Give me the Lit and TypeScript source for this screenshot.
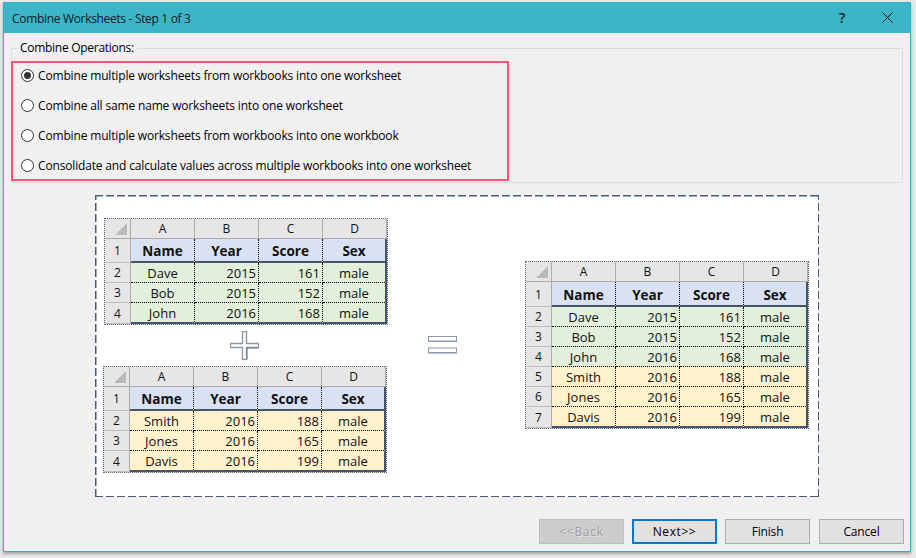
import {LitElement, html, css, svg} from 'lit';
import {customElement, property} from 'lit/decorators.js';

type Row = [string, number, number];

const GREEN: Row[] = [['Dave', 2015, 161], ['Bob', 2015, 152], ['John', 2016, 168]];
const YELLOW: Row[] = [['Smith', 2016, 188], ['Jones', 2016, 165], ['Davis', 2016, 199]];

const OPTIONS = [
    'Combine multiple worksheets from workbooks into one worksheet',
    'Combine all same name worksheets into one worksheet',
    'Combine multiple worksheets from workbooks into one workbook',
    'Consolidate and calculate values across multiple workbooks into one worksheet',
];

@customElement('sheet-table')
export class SheetTable extends LitElement {
    @property({type: Array})
    green: Row[] = [];

    @property({type: Array})
    yellow: Row[] = [];

    // height of the "Name Year Score Sex" row
    @property({type: Number})
    head: number = 24;

    static override styles = css`
        :host {
            display: block;
            width: 284px;
        }

        .sheet {
            display: grid;
            grid-template-columns: 26px repeat(4, 64px);
            border: 1px dotted #55657a;
            font-family: "Open Sans", "Noto Sans", sans-serif;
            font-size: 13px;
            color: #111;
            background: #e6e6e6;
        }

        .sheet > div {
            display: flex;
            align-items: center;
            justify-content: center;
            box-sizing: border-box;
            overflow: hidden;
            white-space: nowrap;
        }

        .corner {
            border-right: 1px solid #ababab;
            border-bottom: 1px solid #ababab;
            padding: 3px 2px 2px 8px;
        }

        .corner svg {
            display: block;
        }

        .col {
            font-size: 12px;
            border-right: 1px solid #ababab;
            border-bottom: 1px solid #ababab;
            padding-bottom: 1px;
        }

        .num {
            font-size: 12px;
            border-right: 1px solid #ababab;
            border-bottom: 1px solid #bdbdbd;
        }

        .head {
            font-weight: 700;
            font-size: 13.5px;
            background: #d9e1f2;
            border-right: 1px dotted #000;
            border-bottom: 2px solid #44546a;
            padding-top: 2px;
        }

        .cell {
            border-right: 1px dotted #000;
            border-bottom: 1px dotted #000;
        }

        .sheet > .right {
            justify-content: flex-end;
            padding-right: 2px;
        }

        .g {
            background: #e2efda;
        }

        .y {
            background: #fff2cc;
        }

        .sheet > .end {
            border-right: 2px solid #44546a;
        }

        .sheet > .last {
            border-bottom: 2px solid #44546a;
        }
    `;

    override render() {
        const rows = [...this.green.map((r) => ({r, c: 'g'})), ...this.yellow.map((r) => ({r, c: 'y'}))];
        const heights = `20px ${this.head}px repeat(${rows.length - 1}, 20px) 21px`;
        return html`
            <div class="sheet" style="grid-template-rows: ${heights}">
                <div class="corner">
                    <svg width="14" height="14" viewBox="0 0 14 14"><polygon points="13,1 13,13 1,13" fill="#b9b9b9"/></svg>
                </div>
                ${['A', 'B', 'C', 'D'].map((l) => html`<div class="col">${l}</div>`)}
                <div class="num">1</div>
                <div class="head">Name</div>
                <div class="head">Year</div>
                <div class="head">Score</div>
                <div class="head end">Sex</div>
                ${rows.map(({r, c}, i) => {
                    const last = i === rows.length - 1 ? 'last' : '';
                    return html`
                        <div class="num">${i + 2}</div>
                        <div class="cell ${c} ${last}">${r[0]}</div>
                        <div class="cell right ${c} ${last}">${r[1]}</div>
                        <div class="cell right ${c} ${last}">${r[2]}</div>
                        <div class="cell end ${c} ${last}">male</div>
                    `;
                })}
            </div>
        `;
    }
}

const plusIcon = svg`
    <path d="M12.5 .5h4v12h12v4h-12v12h-4v-12h-12v-4h12z" fill="#fff" stroke="#8d99aa" stroke-width="1.4"/>
    <path d="M16.5 17h12M17 17v11.5" fill="none" stroke="#6f7d90" stroke-width="1"/>
`;

const equalsIcon = svg`
    <rect x=".5" y=".5" width="28" height="4.5" fill="#fff" stroke="#8d99aa"/>
    <rect x=".5" y="12" width="28" height="4.5" fill="#fff" stroke="#8d99aa"/>
    <path d="M0 5.5h29M0 17h29" stroke="#8d99aa" stroke-width="1"/>
`;

@customElement('app-root')
export class AppRoot extends LitElement {
    static override styles = css`
        :host {
            display: block;
            width: 916px;
            height: 558px;
            box-sizing: border-box;
            padding: 2px 5px 6px 3px;
            background: #e9e9e9;
            font-family: "Open Sans", "Noto Sans", sans-serif;
            font-size: 12px;
            letter-spacing: -0.16px;
            color: #000;
        }

        .window {
            box-sizing: border-box;
            height: 100%;
            display: flex;
            flex-direction: column;
            border: 1px solid #2cb5c9;
            background: #f0f0f0;
            box-shadow: 0 2px 3px rgba(0, 0, 0, 0.3);
        }

        .title {
            flex: none;
            height: 30px;
            display: flex;
            align-items: center;
            padding-left: 8px;
            background: #3bb6c8;
            color: #0a1a20;
        }

        .title .name {
            flex: 1;
            letter-spacing: -0.32px;
        }

        .title .help {
            width: 46px;
            margin-right: -1px;
            margin-left: 1px;
            padding-bottom: 2px;
            text-align: center;
            font-size: 14px;
            font-weight: 600;
        }

        .title .close {
            width: 46px;
            display: flex;
            justify-content: center;
            padding-bottom: 2px;
        }

        .body {
            flex: 1;
            display: flex;
            flex-direction: column;
            padding: 7px 7px 7px;
        }

        fieldset {
            margin: 0;
            padding: 0;
            border: 1px solid #dcdcdc;
            height: 143px;
            box-sizing: border-box;
            min-width: 0;
        }

        legend {
            margin-left: 5px;
            padding: 0 3px 0 3px;
            line-height: 16px;
            letter-spacing: -0.28px;
        }

        .options {
            box-sizing: border-box;
            width: 498px;
            height: 120px;
            margin: 5px 0 0 -1px;
            padding: 4px 0 0 8px;
            border: 2px solid #f4577a;
            display: flex;
            flex-direction: column;
            gap: 14px;
        }

        .option {
            display: flex;
            align-items: center;
            gap: 4px;
            height: 16px;
            white-space: nowrap;
        }

        .radio {
            box-sizing: border-box;
            flex: none;
            width: 13px;
            height: 13px;
            border: 1px solid #333;
            border-radius: 50%;
            background: #fff;
            display: flex;
            align-items: center;
            justify-content: center;
        }

        .radio.on::after {
            content: "";
            width: 7px;
            height: 7px;
            border-radius: 50%;
            background: #333;
        }

        .canvas {
            box-sizing: border-box;
            width: 724px;
            height: 302px;
            margin: 12px 0 0 84px;
            padding: 0 0 1px 9px;
            display: flex;
            align-items: center;
            letter-spacing: normal;
            background-color: #fff;
            background-image:
                repeating-linear-gradient(90deg, #4a5a70 0 8px, transparent 8px 11px),
                repeating-linear-gradient(90deg, #4a5a70 0 8px, transparent 8px 11px),
                repeating-linear-gradient(0deg, #4a5a70 0 8px, transparent 8px 11px),
                repeating-linear-gradient(0deg, #4a5a70 0 8px, transparent 8px 11px);
            background-size: 100% 1.5px, 100% 1.5px, 1.5px 100%, 1.5px 100%;
            background-position: 0 0, 0 100%, 0 0, 100% 0;
            background-repeat: no-repeat;
        }

        .left {
            display: flex;
            flex-direction: column;
            align-items: center;
            width: 284px;
            gap: 6px;
        }

        .left sheet-table:last-child {
            margin-left: -2px;
        }

        .plus,
        .equals {
            display: block;
        }

        .plus {
            margin-left: -3px;
        }

        .equals {
            margin: 0 67px 1px 40px;
        }

        .right-sheet {
            margin-bottom: 1px;
        }

        .buttons {
            display: flex;
            justify-content: flex-end;
            gap: 8px;
            margin-top: 22px;
            margin-right: -1px;
        }

        button {
            box-sizing: border-box;
            width: 85px;
            height: 25px;
            padding: 0;
            border: 1px solid #adadad;
            background: #e1e1e1;
            font: inherit;
            letter-spacing: inherit;
            color: #000;
        }

        button.back {
            background: #cccccc;
            border-color: #bfbfbf;
            color: #a0a0a0;
            letter-spacing: 0.7px;
            text-shadow: 1px 1px 0 #e2e2e2;
        }

        button.next {
            border: 2px solid #0078d7;
            letter-spacing: 0.6px;
        }

        button.cancel {
            margin-left: 1px;
        }
    `;

    override render() {
        return html`
            <div class="window">
                <div class="title">
                    <span class="name">Combine Worksheets - Step 1 of 3</span>
                    <span class="help">?</span>
                    <span class="close">
                        <svg width="11" height="11" viewBox="0 0 11 11"><path d="M.5 .5l10 10M10.5 .5l-10 10" stroke="#0a1a20" fill="none"/></svg>
                    </span>
                </div>
                <div class="body">
                    <fieldset>
                        <legend>Combine Operations:</legend>
                        <div class="options">
                            ${OPTIONS.map((o, i) => html`
                                <div class="option"><span class="radio ${i === 0 ? 'on' : ''}"></span>${o}</div>
                            `)}
                        </div>
                    </fieldset>
                    <div class="canvas">
                        <div class="left">
                            <sheet-table .green=${GREEN}></sheet-table>
                            <svg class="plus" width="29" height="29" viewBox="0 0 29 29">${plusIcon}</svg>
                            <sheet-table .yellow=${YELLOW}></sheet-table>
                        </div>
                        <svg class="equals" width="30" height="18" viewBox="0 0 30 18">${equalsIcon}</svg>
                        <sheet-table class="right-sheet" .head=${25} .green=${GREEN} .yellow=${YELLOW}></sheet-table>
                    </div>
                    <div class="buttons">
                        <button class="back">&lt;&lt;Back</button>
                        <button class="next">Next&gt;&gt;</button>
                        <button>Finish</button>
                        <button class="cancel">Cancel</button>
                    </div>
                </div>
            </div>
        `;
    }
}
